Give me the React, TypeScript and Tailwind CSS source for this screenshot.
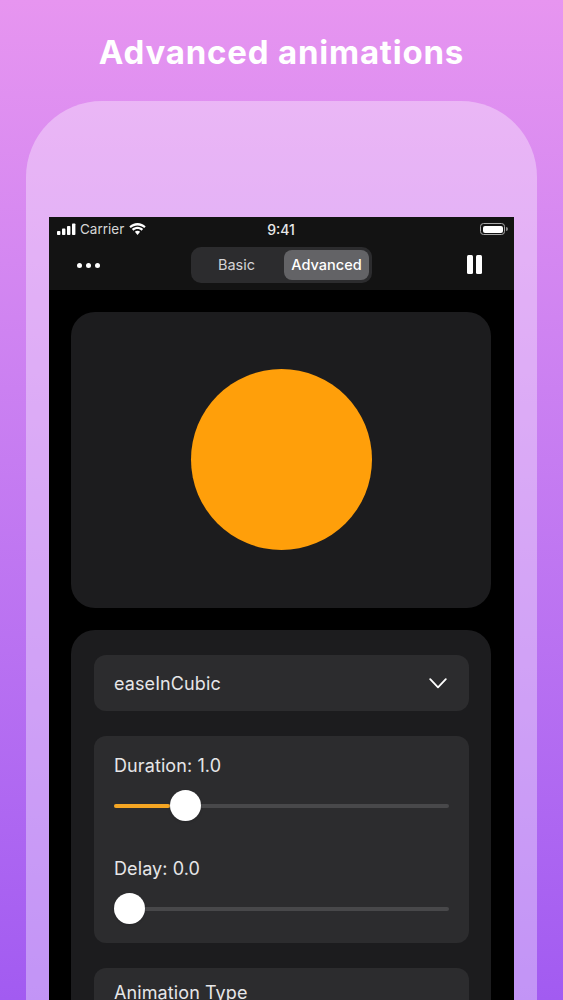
const font = "font-['Inter',sans-serif]"

function StatusBar() {
  return (
    <div className="flex h-[24px] items-center justify-between pl-[8px] pr-[6px] text-white">
      <div className="flex w-[149px] items-center">
        <svg width="19" height="12" viewBox="0 0 19 12" fill="currentColor">
          <rect x="0" y="8" width="3.4" height="4" rx="0.8" />
          <rect x="5" y="5.6" width="3.4" height="6.4" rx="0.8" />
          <rect x="10" y="3" width="3.4" height="9" rx="0.8" />
          <rect x="15" y="0.4" width="3.4" height="11.6" rx="0.8" />
        </svg>
        <span className="ml-[4px] pt-[2px] text-[13.5px] leading-none text-[#d6d6d6]">Carrier</span>
        <svg className="ml-[5px]" width="17" height="13" viewBox="0 0 17 13" fill="currentColor">
          <path d="M8.5 2.4c2.6 0 5 1 6.7 2.700l1.500-1.600C14.600 1.400 11.700 0 8.500 0S2.400 1.400.3 3.500l1.500 1.600C3.500 3.400 5.900 2.400 8.500 2.400z" />
          <path d="M8.500 6.100c1.600 0 3 .6 4.100 1.600l1.500-1.600c-1.500-1.400-3.500-2.300-5.600-2.300s-4.100.9-5.600 2.300l1.500 1.600c1.100-1 2.500-1.600 4.100-1.600z" />
          <path d="M8.500 7.700c-1 0-1.900.4-2.600 1l2.600 3.300 2.600-3.300c-.7-.6-1.600-1-2.600-1z" />
        </svg>
      </div>
      <span className="pt-[1px] text-[14px] leading-none font-medium text-[#e8e8e8]">9:41</span>
      <div className="flex w-[152px] items-center justify-end">
        <div className="h-[12px] w-[25px] rounded-[3.5px] border border-[#a8a8a8] p-[1.5px]">
          <div className="h-full w-full rounded-[2px] bg-white" />
        </div>
        <div className="ml-[1px] h-[4px] w-[1.5px] rounded-r-sm bg-[#8a8a8a]" />
      </div>
    </div>
  )
}

function NavBar() {
  return (
    <div className="flex h-[49px] items-start justify-between pt-[6px] pl-[28px] pr-[32px]">
      <div className="flex h-[36px] w-[82px] items-center gap-[4px]">
        <span className="h-[5px] w-[5px] rounded-full bg-white" />
        <span className="h-[5px] w-[5px] rounded-full bg-white" />
        <span className="h-[5px] w-[5px] rounded-full bg-white" />
      </div>
      <div className="flex h-[36px] w-[181px] items-center rounded-[10px] bg-[#2c2c2e] p-[3px] text-[14.5px]">
        <div className="flex-1 pr-[5px] text-center text-[#d4d4d6]">Basic</div>
        <div className="flex h-[30px] w-[85px] items-center justify-center rounded-[8px] bg-[#636366] font-medium text-white">
          Advanced
        </div>
      </div>
      <div className="flex h-[36px] w-[78px] items-center justify-end gap-[3px] pb-[1px]">
        <span className="h-[19px] w-[6px] rounded-[1.5px] bg-white" />
        <span className="h-[19px] w-[6px] rounded-[1.5px] bg-white" />
      </div>
    </div>
  )
}

function Slider({ label, percent }: { label: string; percent: number }) {
  return (
    <div>
      <div className="text-[18px] leading-[22px] tracking-[0.1px] text-[#e6e6e8]">{label}</div>
      <div className="relative mt-[13px] flex h-[31px] items-center">
        <div className="h-[4px] w-full rounded-full bg-[#48484a]" />
        {percent > 0 && (
          <div
            className="absolute left-0 h-[4px] rounded-full bg-[#f5a623]"
            style={{ width: `${percent}%` }}
          />
        )}
        <div
          className="absolute h-[31px] w-[31px] rounded-full bg-white shadow-sm"
          style={{ left: `${percent}%` }}
        />
      </div>
    </div>
  )
}

export default function App() {
  return (
    <div className={`${font} flex h-[1000px] w-[563px] flex-col overflow-hidden bg-gradient-to-b from-[#e795f0] to-[#a25bf1]`}>
      <h1 className="mt-[32px] text-center text-[33px] leading-[40px] font-bold tracking-[0.8px] text-white">
        Advanced animations
      </h1>
      <div className="relative mx-[26px] mt-[29px] flex-1 rounded-t-[76px] bg-white/35 px-[23px] pt-[116px]">
        <div className="absolute inset-x-0 bottom-0 h-[12px] bg-gradient-to-b from-transparent to-white/40" />
        <div className="relative h-full bg-black">
          <div className="bg-[#131313]">
            <StatusBar />
            <NavBar />
          </div>
          <div className="pl-[22px] pr-[23px] pt-[22px]">
            <div className="flex h-[296px] items-center justify-center rounded-[24px] bg-[#1c1c1e] pb-[1px]">
              <div className="h-[181px] w-[181px] rounded-full bg-[#ff9f0a]" />
            </div>
            <div className="mt-[22px] rounded-t-[24px] bg-[#1c1c1e] pl-[23px] pr-[22px] pt-[25px] pb-[40px]">
              <div className="flex h-[56px] items-center justify-between rounded-[12px] bg-[#2c2c2e] pl-[20px] pr-[22px] text-[18px] tracking-[0.1px] text-[#e6e6e8]">
                <span>easeInCubic</span>
                <svg width="18" height="11" viewBox="0 0 18 11" fill="none" stroke="#ffffff" strokeWidth="1.8" strokeLinecap="round" strokeLinejoin="round">
                  <path d="M1.2 1.2 9 9.400l7.800-8.200" />
                </svg>
              </div>
              <div className="mt-[25px] flex flex-col gap-[37px] rounded-[12px] bg-[#2c2c2e] px-[20px] pt-[19px] pb-[19px]">
                <Slider label="Duration: 1.0" percent={16.7} />
                <Slider label="Delay: 0.0" percent={0} />
              </div>
              <div className="mt-[25px] rounded-[12px] bg-[#2c2c2e] px-[20px] pt-[13px] pb-[20px] text-[18px] leading-[24px] tracking-[0.1px] text-[#e6e6e8]">
                Animation Type
              </div>
            </div>
          </div>
        </div>
      </div>
    </div>
  )
}
